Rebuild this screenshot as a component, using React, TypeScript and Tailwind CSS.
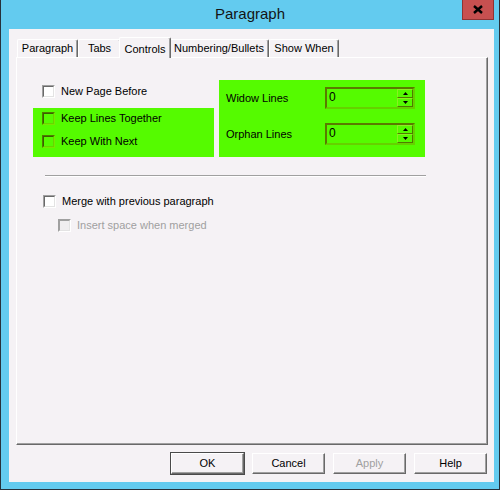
import React from "react";
import clsx from "clsx";

function Check({ tone = "normal" }: { tone?: "normal" | "green" | "disabled" }) {
  return (
    <span
      className={clsx(
        "block w-[13px] h-[13px] shrink-0 border",
        tone === "green"
          ? "border-t-[#4f7c00] border-l-[#4f7c00] border-r-[#78e800] border-b-[#78e800]"
          : "border-t-[#a0a0a0] border-l-[#a0a0a0] border-r-white border-b-white"
      )}
    >
      <span
        className={clsx(
          "block w-full h-full border",
          tone === "green" &&
            "bg-[#55fb00] border-t-[#3a5f00] border-l-[#3a5f00] border-r-[#66d600] border-b-[#66d600]",
          tone === "normal" &&
            "bg-white border-t-[#696969] border-l-[#696969] border-r-[#e3e3e3] border-b-[#e3e3e3]",
          tone === "disabled" &&
            "bg-[#f0eef0] border-t-[#a0a0a0] border-l-[#a0a0a0] border-r-[#e3e3e3] border-b-[#e3e3e3]"
        )}
      />
    </span>
  );
}

function CheckRow({ label, tone = "normal" }: { label: string; tone?: "normal" | "green" | "disabled" }) {
  return (
    <div className="flex items-center gap-[6px] h-[13px]">
      <Check tone={tone} />
      <span className={clsx("leading-none", tone === "disabled" ? "text-[#a0a0a0]" : "text-black")}>{label}</span>
    </div>
  );
}

function SpinArrow({ up }: { up?: boolean }) {
  return (
    <span className="flex-1 flex items-center justify-center border border-t-[#8af020] border-l-[#8af020] border-r-[#4f7c00] border-b-[#4f7c00]">
      <svg width="5" height="3" viewBox="0 0 5 3">
        {up ? <polygon points="2.5,0 5,3 0,3" fill="#000" /> : <polygon points="0,0 5,0 2.5,3" fill="#000" />}
      </svg>
    </span>
  );
}

function SpinBox({ value }: { value: string }) {
  return (
    <div className="w-[90px] h-[22px] flex border-2 border-t-[#5a7a00] border-l-[#5a7a00] border-r-[#66d000] border-b-[#66d000] bg-[#55fb00]">
      <span className="flex-1 pl-[2px] pt-[2px] text-[12px] leading-none">{value}</span>
      <div className="w-[16px] flex flex-col">
        <SpinArrow up />
        <SpinArrow />
      </div>
    </div>
  );
}

function Tab({ label, width, active }: { label: string; width: string; active?: boolean }) {
  return (
    <div
      className={clsx(
        "flex justify-center rounded-t-[2px] border-t border-l border-r border-t-white border-l-white border-r-[#696969] shadow-[inset_-1px_0_0_#a0a0a0] bg-[#f5f2f5]",
        width,
        active ? "h-[21px] -mx-[2px] -mb-[1px] relative z-10 items-start pt-[3px]" : "h-[18px] items-center"
      )}
    >
      {label}
    </div>
  );
}

function Button({ label, isDefault, disabled }: { label: string; isDefault?: boolean; disabled?: boolean }) {
  return (
    <div className={clsx("w-[75px] h-[23px] border", isDefault ? "border-[#4a4a4a]" : "border-transparent")}>
      <div className="w-full h-full flex items-center justify-center border border-t-white border-l-white border-r-[#696969] border-b-[#696969] shadow-[inset_-1px_-1px_0_#a0a0a0] bg-[#f5f2f5]">
        <span className={disabled ? "text-[#a0a0a0]" : "text-black"}>{label}</span>
      </div>
    </div>
  );
}

export default function App(): React.JSX.Element {
  return (
    <div className="w-[500px] h-[490px] bg-[#63cbef] border-x border-b border-[#26313b] flex flex-col font-['Liberation_Sans',Arial,sans-serif] text-[11px] text-black">
      <div className="h-[29px] relative flex items-center justify-center">
        <span className="text-[15px] text-[#141414] -mt-[1px]">Paragraph</span>
        <div className="absolute right-[5px] top-0 w-[32px] h-[20px] bg-[#c75050] border border-t-0 border-[#8f3434] flex items-center justify-center">
          <svg width="10" height="9" viewBox="0 0 10 9">
            <path d="M1 1 L9 8 M9 1 L1 8" stroke="#000" strokeWidth="2.4" />
          </svg>
        </div>
      </div>

      <div className="ml-[8px] mr-[5px] h-[453px] bg-[#f5f2f5] flex flex-col pl-[7px] pr-[6px] pt-[8px]">
        <div className="flex items-end h-[20px] pl-[1px]">
          <Tab label="Paragraph" width="w-[61px]" />
          <Tab label="Tabs" width="w-[43px]" />
          <Tab label="Controls" width="w-[52px]" active />
          <Tab label="Numbering/Bullets" width="w-[100px]" />
          <Tab label="Show When" width="w-[70px]" />
        </div>

        <div className="h-[388px] border border-t-white border-l-white border-r-[#696969] border-b-[#696969] shadow-[inset_-1px_-1px_0_#a0a0a0] flex flex-col">
          <div className="flex items-start gap-[5px] pl-[16px] pt-[22px]">
            <div className="w-[181px] flex flex-col">
              <div className="mt-[5px] pl-[9px]">
                <CheckRow label="New Page Before" />
              </div>
              <div className="mt-[10px] h-[49px] bg-[#55fb00] pl-[9px] pt-[4px] flex flex-col gap-[10px]">
                <CheckRow label="Keep Lines Together" tone="green" />
                <CheckRow label="Keep With Next" tone="green" />
              </div>
            </div>

            <div className="w-[206px] h-[77px] bg-[#55fb00] pl-[7px] pt-[7px] flex flex-col gap-[14px]">
              <div className="flex items-center">
                <span className="w-[99px] pt-[1px]">Widow Lines</span>
                <SpinBox value="0" />
              </div>
              <div className="flex items-center">
                <span className="w-[99px] pt-[1px]">Orphan Lines</span>
                <SpinBox value="0" />
              </div>
            </div>
          </div>

          <div className="mt-[18px] ml-[28px] w-[381px] border-t border-b border-t-[#a0a0a0] border-b-white" />

          <div className="mt-[18px] ml-[26px]">
            <CheckRow label="Merge with previous paragraph" />
          </div>
          <div className="mt-[11px] ml-[41px]">
            <CheckRow label="Insert space when merged" tone="disabled" />
          </div>
        </div>

        <div className="mt-[7px] flex justify-end gap-[6px]">
          <Button label="OK" isDefault />
          <Button label="Cancel" />
          <Button label="Apply" disabled />
          <Button label="Help" />
        </div>
      </div>
    </div>
  );
}
